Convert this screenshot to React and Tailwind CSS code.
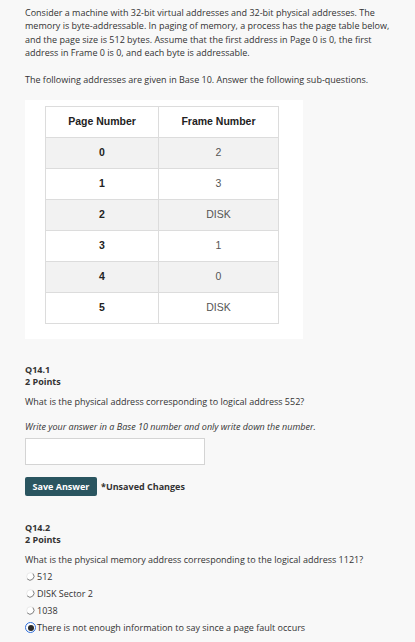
import React from 'react';

const rows = [
  ['0', '2'],
  ['1', '3'],
  ['2', 'DISK'],
  ['3', '1'],
  ['4', '0'],
  ['5', 'DISK'],
];

const options = ['512', 'DISK Sector 2', '1038', 'There is not enough information to say since a page fault occurs'];

function Radio({ checked }) {
  if (checked) {
    return (
      <span className="flex h-[11px] w-[11px] shrink-0 items-center justify-center rounded-full border-[1.5px] border-[#2f6fdc] bg-white">
        <span className="h-[6px] w-[6px] rounded-full bg-[#2a2a2a]" />
      </span>
    );
  }
  return (
    <svg width="9" height="9" viewBox="0 0 9 9" className="ml-[1px] mr-[1px] shrink-0">
      <circle cx="4.5" cy="4.5" r="3.8" fill="#fff" stroke="#e4e4e4" strokeWidth="0.8" />
      <path d="M6.9 1.6 A3.8 3.8 0 0 1 1.2 6.9" fill="none" stroke="#777" strokeWidth="0.9" />
    </svg>
  );
}

export default function App() {
  return (
    <div className="min-h-[642px] bg-[#f8f8f8] px-[25px] pt-[6px] text-[#333] font-['Open_Sans',sans-serif] text-[9px]">
      <p className="leading-[13.4px]">
        Consider a machine with 32-bit virtual addresses and 32-bit physical addresses. The memory is byte-addressable. In paging of memory, a process has the page table below, and the page size is 512 bytes. Assume that the first address in Page 0 is 0, the first address in Frame 0 is 0, and each byte is addressable.
      </p>
      <p className="mt-[13px] leading-[13.4px]">
        The following addresses are given in Base 10. Answer the following sub-questions.
      </p>

      <div className="mt-[14px] w-[278px] bg-white pl-[20px] pt-[6px] pb-[15px]">
        <table className="w-[234px] border-collapse font-['Liberation_Sans',Arial,sans-serif] text-[10.5px]">
          <thead>
            <tr className="h-[31px]">
              <th className="w-[113px] border border-[#dcdcdc] font-bold text-[#222]">Page Number</th>
              <th className="border border-[#dcdcdc] font-bold text-[#222]">Frame Number</th>
            </tr>
          </thead>
          <tbody>
            {rows.map(([p, f], i) => (
              <tr key={p} className={i % 2 === 0 ? 'h-[31px] bg-[#f2f2f2]' : 'h-[31px] bg-white'}>
                <td className="border border-[#dcdcdc] text-center font-bold text-[#222]">{p}</td>
                <td className="border border-[#dcdcdc] text-center text-[#555]">{f}</td>
              </tr>
            ))}
          </tbody>
        </table>
      </div>

      <div className="mt-[25px] font-bold leading-[12px]">
        <div>Q14.1</div>
        <div>2 Points</div>
      </div>
      <p className="mt-[7px] leading-[13px]">What is the physical address corresponding to logical address 552?</p>
      <p className="mt-[12px] italic leading-[13px]">Write your answer in a Base 10 number and only write down the number.</p>
      <div className="mt-[5px] h-[27px] w-[180px] border border-[#d4d4d4] bg-white" />
      <div className="mt-[12px] flex items-center gap-[4px]">
        <button className="h-[19px] w-[72px] rounded-[2px] bg-[#2a5560] font-bold text-white">Save Answer</button>
        <span className="font-bold">*Unsaved Changes</span>
      </div>

      <div className="mt-[26px] font-bold leading-[12px]">
        <div>Q14.2</div>
        <div>2 Points</div>
      </div>
      <p className="mt-[7px] leading-[13px]">What is the physical memory address corresponding to the logical address 1121?</p>
      <div className="mt-[2px] flex flex-col">
        {options.map((o, i) => (
          <label key={o} className="flex h-[17px] items-center gap-[1px]">
            <Radio checked={i === 3} />
            <span>{o}</span>
          </label>
        ))}
      </div>
    </div>
  );
}
